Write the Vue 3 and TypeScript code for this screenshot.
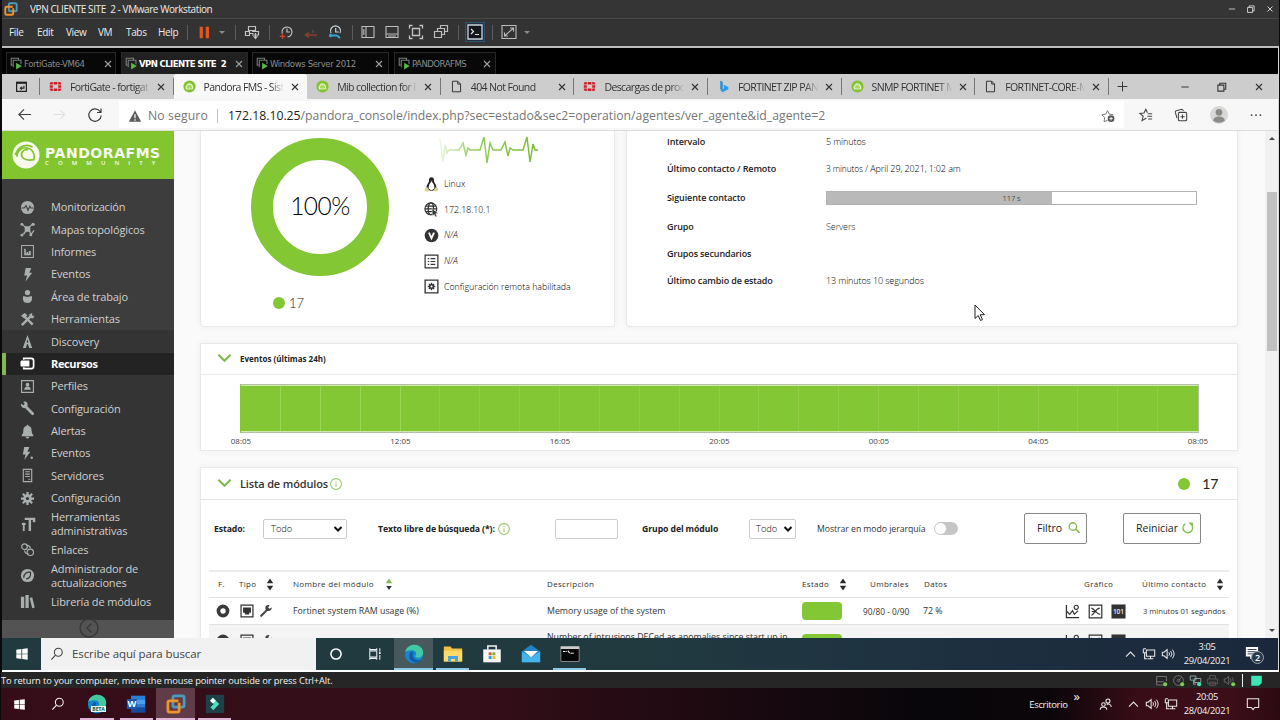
<script setup lang="ts">
interface BrowserTab { title: string; icon: string; active?: boolean }
interface MenuEntry { label: string; icon: string; kind?: string }

const icons: Record<string, string> = {
  vmware: '<g fill="none" stroke-width="2.2"><rect x="5.500" y="1.500" width="9" height="9" rx="1.500" stroke="#4b9cb8"/><path d="M10 5.500H3a1.500 1.500 0 0 0-1.500 1.500v6A1.500 1.500 0 0 0 3 14.500h6a1.500 1.500 0 0 0 1.500-1.500V7" stroke="#f0932b"/></g>',
  pause: '<path d="M2 1h4v14H2zM9.500 1h4v14h-4z" fill="#e2571f"/>',
  caret: '<path d="M2 4h6L5 7z" fill="#8c8c8c"/>',
  send: '<g fill="none" stroke="#c4c4c4" stroke-width="1.200"><path d="M4.500 2.500h7v4h-7zM1.500 7.500h4v4h-4zM8 7.500h6.500v3.500H8M5.500 9.500h4"/><path d="M11.500 9v5M9.500 12l2 2.500 2-2.500"/></g>',
  snapNew: '<g fill="none" stroke="#bdbdbd" stroke-width="1.200"><path d="M4.200 9.500A5 5 0 1 1 9.500 13"/><path d="M9 4.500V8h3"/></g><path d="M4.500 9.500v5.500M1.700 12.300h5.600" stroke="#c8472d" stroke-width="1.300"/>',
  snapBack: '<path d="M3 11h11M6 8.500l-3.500 2.500 3.500 2.500" fill="none" stroke="#8f3f2e" stroke-width="1.500"/><path d="M10 6v3" stroke="#555" stroke-width="1.200"/>',
  snapTool: '<g fill="none" stroke="#c9d4d8" stroke-width="1.200"><path d="M4 9A5 5 0 1 1 13 9"/><path d="M8.700 4V8h3"/></g><path d="M2 11.500h8M3.500 9.800v3.400M10 11.500l3 2.500" stroke="#34a5d6" stroke-width="2"/>',
  side: '<path d="M2 2.500h12v11H2zM6 2.500v11M3.800 5v6" fill="none" stroke="#bdbdbd" stroke-width="1.100"/>',
  bottom: '<path d="M2 2.500h12v11H2zM2 10h12M4 12h8" fill="none" stroke="#bdbdbd" stroke-width="1.100"/>',
  full: '<path d="M4.500 4.500h7v7h-7zM1.500 4.500v-3h3M11.500 1.500h3v3M14.500 11.500v3h-3M4.500 14.500h-3v-3" fill="none" stroke="#c4c4c4" stroke-width="1.300"/>',
  unity: '<path d="M1.500 7.500h7v6h-7zM4.500 7.500v-3h7v6h-3M7.500 4.500v-3h7v6h-3" fill="none" stroke="#bdbdbd" stroke-width="1.200"/>',
  console: '<path d="M1 1h14v14H1z" fill="#14171d" stroke="#c9d3e2" stroke-width="1.300"/><path d="M4 5l2.500 2.500L4 10M8 10.500h4" fill="none" stroke="#e4e4e4" stroke-width="1.200"/>',
  stretch: '<path d="M1 1.500h14v13H1zM9 4h3.500v3.500M12 4.500L4 11.500M3.500 8.500V12H7" fill="none" stroke="#bdbdbd" stroke-width="1.100"/>',
  vm: '<path d="M3 10H1.500V1.500h9V4M4 12.500V4h9.500v5" fill="none" stroke="#77807a" stroke-width="1.300"/><path d="M7.500 7l7 4.200-7 4.300z" fill="#58b944"/>',
  x: '<path d="M4 4l8 8M12 4l-8 8" fill="none" stroke="currentColor" stroke-width="1.500"/>',
  tabsMenu: '<path d="M2 3h12v11H2z" fill="none" stroke="#222" stroke-width="1.500"/><path d="M2 3.500h12" stroke="#222" stroke-width="2.500"/><path d="M11 7v3H6.500M8.500 8l-2 2 2 2" fill="none" stroke="#222" stroke-width="1.300"/>',
  forti: '<g fill="#d31f2c"><path d="M5.800 2.500h4.400v3H5.800zM5.800 10.500h4.400v3H5.800zM1 6.500h3.700v3H1zM11.300 6.500H15v3h-3.700zM1 5.500v-1a2 2 0 0 1 2-2h1.700v3zM15 5.500v-1a2 2 0 0 0-2-2h-1.700v3zM1 10.500v1a2 2 0 0 0 2 2h1.700v-3zM15 10.500v1a2 2 0 0 1-2 2h-1.700v-3z"/></g>',
  pandora: '<circle cx="8" cy="8" r="7.500" fill="#83c332"/><path d="M4.200 11C2.700 6.500 7 3.800 9.500 5.200c2 1 2.500 3.500 2.500 5.600z" fill="#a9da61" stroke="#e9f6d2" stroke-width="1.300"/>',
  page: '<path d="M3 1.500h6.500L13 5v9.500H3zM9.500 1.500V5H13" fill="none" stroke="#333" stroke-width="1.200"/>',
  bing: '<path d="M4 1l3 1v11l-3-1.600z" fill="#268bd8"/><path d="M7.500 5.500L14 8.500v3L7 15l-3-2 4-2 .8-2.200z" fill="#2b9be6"/>',
  plus: '<path d="M8 2v12M2 8h12" stroke="#333" stroke-width="1.200"/>',
  min: '<path d="M3 8h10" stroke="currentColor" stroke-width="1.300"/>',
  restore: '<path d="M2.500 5.500h8v8h-8zM5 5V3h8v8h-2" fill="none" stroke="currentColor" stroke-width="1.400"/>',
  back: '<path d="M15 8H2M7.500 2.500L2 8l5.500 5.500" fill="none" stroke="#404040" stroke-width="1.200"/>',
  forward: '<path d="M2 8h12M9 3.500L13.500 8 9 12.500" fill="none" stroke="#dedede" stroke-width="1.100"/>',
  reload: '<path d="M13.300 4.800A6.200 6.200 0 1 0 14.200 8.500M14 1.500v4h-4" fill="none" stroke="#3d3d3d" stroke-width="1.200"/>',
  warn: '<path d="M8 1.500l7 13H1z" fill="#5b5b5b"/><path d="M8 6v4.500M8 11.800v1.500" stroke="#fff" stroke-width="1.400"/>',
  starAdd: '<path d="M7.500 13l-4 1.500.7-4.700L1 6.500 5.500 5.800 7.500 1.800 9.500 5.800 14 6.500" fill="none" stroke="#777" stroke-width="1.100"/><circle cx="11.500" cy="11" r="3.800" fill="#555"/><path d="M11.500 9v4M9.500 11h4" stroke="#fff"/>',
  favs: '<path d="M8.500 11.500L3.500 14.500 4.800 9.500 1 6.300l4.700-.5L7.800 1.500 9.600 5.500M10 6.500h5M9.500 9.500H15M10.500 12.500H15" fill="none" stroke="#444" stroke-width="1.200"/>',
  collect: '<rect x="5" y="5" width="9.500" height="9.500" rx="1.500" fill="none" stroke="#444" stroke-width="1.200"/><path d="M9.700 7.500v4.800M7.300 9.900h4.800M3.500 11.500L1.500 5a1.500 1.500 0 0 1 1-1.800L9 1.500 11 3" fill="none" stroke="#444" stroke-width="1.200"/>',
  avatar: '<circle cx="8" cy="8" r="8" fill="#d8d8d6"/><circle cx="8" cy="5.600" r="3" fill="#8c8a87"/><path d="M2.900 13c0-5 10.200-5 10.200 0a8 8 0 0 1-10.200 0z" fill="#8c8a87"/>',
  dots: '<g fill="#333"><circle cx="3" cy="8" r="1"/><circle cx="8" cy="8" r="1"/><circle cx="13" cy="8" r="1"/></g>',
  monitor: '<circle cx="8" cy="8" r="7" fill="#a9afaf"/><path d="M1.500 8.500h3L6.500 6l2 5 2-4.500 1 2h3" fill="none" stroke="#3d3d3d" stroke-width="1.100"/>',
  topology: '<path d="M2 2l4 4M14 2l-4 3M2 14l4-4M10 9l1.500 4M4 13l2-3M12 13l3-4" stroke="#a9afaf" stroke-width="1.300"/><rect x="5" y="4.500" width="6" height="6" fill="#a9afaf"/><g fill="#a9afaf"><circle cx="2" cy="2.500" r="1.500"/><circle cx="14" cy="2.500" r="1.700"/><circle cx="2" cy="14" r="1.500"/><circle cx="11.500" cy="13.500" r="1.600"/></g>',
  report: '<path d="M1.700 1.700h12.600v12.600H1.700z" fill="none" stroke="#a9afaf" stroke-width="1.100"/><path d="M4.500 5v7h7V7.500h-2V10H8.700V8.500H7V10H6.200V5z" fill="#a9afaf"/>',
  bolt: '<path d="M6 1h6L10 6h3L6 15.500 7.500 9H4.500z" fill="#a9afaf"/>',
  work: '<circle cx="8" cy="3.800" r="2.800" fill="#a9afaf"/><path d="M3.500 7.500l4.500 1 4.500-1c1 3.500 0 7.500-4.500 7.500S2.500 11 3.500 7.500z" fill="#a9afaf"/>',
  tools: '<path d="M2 14L11 5M4 4l9.500 9.500" stroke="#a9afaf" stroke-width="2.600"/><path d="M1 4l4-3 3 2.500-3.500 3.500zM10 2.500L13 1v3h2.500L14 7l-4-1z" fill="#a9afaf"/>',
  discovery: '<path d="M8 1l5 14H9.800L8.500 11h-1L6.200 15H3z" fill="#a9afaf"/><path d="M8 5.500l1 3.500H7z" fill="#333"/>',
  resources: '<path d="M4 4V2.500h8A2.500 2.500 0 0 1 14.500 5v6a2.500 2.500 0 0 1-2.500 2.500H4V12" fill="none" stroke="#fff" stroke-width="1.800"/><path d="M1.500 4.800H10v6.400H1.500A1.500 1.500 0 0 1 .5 10V6a1.500 1.500 0 0 1 1-1.200z" fill="#fff"/>',
  profile: '<path d="M1.700 1.700h12.600v12.600H1.700z" fill="none" stroke="#a9afaf" stroke-width="1.200"/><circle cx="8" cy="6" r="2" fill="#a9afaf"/><path d="M4.500 11.500c0-4.500 7-4.500 7 0z" fill="#a9afaf"/>',
  wrench: '<path d="M6.500 6.500l7 7" stroke="#a9afaf" stroke-width="3" stroke-linecap="round"/><path d="M1 3l3 1.500L5 3 3.500 1C7-.5 9.500 3 7.500 6.500 5 9 .5 7 1 3z" fill="#a9afaf"/>',
  bell: '<path d="M8 .8c.8 0 1 .7 1 1.300 3 .6 3.500 3 3.500 6 0 2 1 2.900 1.700 3.900v1H1.800v-1c.7-1 1.700-1.900 1.700-3.900 0-3 .5-5.400 3.500-6 0-.6.200-1.300 1-1.300zM6 13.700h4C9.800 16 6.200 16 6 13.700z" fill="#a9afaf"/>',
  boltPlus: '<path d="M4.500 1h5.500L8 6h3L4.500 15 6 9H3z" fill="#a9afaf"/><circle cx="12.500" cy="12.500" r="1.300" fill="#a9afaf"/>',
  server: '<path d="M3.500 1.500h9v13h-9zM5.500 4h5M5.500 6.500h5M5.500 9h5" fill="none" stroke="#a9afaf" stroke-width="1.200"/><path d="M9 12h2" stroke="#a9afaf"/>',
  gear: '<g stroke="#a9afaf" stroke-width="2.400"><path d="M8 1v14M1 8h14M3 3l10 10M13 3L3 13"/></g><circle cx="8" cy="8" r="4.600" fill="#a9afaf"/><circle cx="8" cy="8" r="1.700" fill="#333"/>',
  admin: '<path d="M5 2h10v3.500M10.500 2v13" fill="none" stroke="#a9afaf" stroke-width="2.600"/><path d="M4 6v9M2 7.500h4" stroke="#a9afaf" stroke-width="2"/>',
  links: '<g fill="none" stroke="#a9afaf" stroke-width="1.300"><circle cx="4.800" cy="5" r="3"/><circle cx="11" cy="11" r="3.400"/><path d="M7 3.500c3 0 4 1.500 4 3.500M9 12.500C6 12.500 5 11 5 9"/></g>',
  update: '<circle cx="8" cy="8" r="7" fill="#a9afaf"/><path d="M4 10.500C4 5.500 8 4 11 4.500c1.500 3-1 7-4.500 7" fill="none" stroke="#333" stroke-width="1.300"/>',
  library: '<path d="M1 3h3.500v12H1zM5.800 1h3.500v14H5.800zM10.300 4.200l2.700-.7 2.700 11-2.700.7z" fill="#a9afaf"/>',
  collapse: '<circle cx="10" cy="10" r="9" fill="none" stroke="#383838" stroke-width="1.400"/><path d="M12.500 5.500L8 10l4.500 4.500" fill="none" stroke="#383838" stroke-width="1.300"/>',
  linux: '<path d="M8 .3c2.300 0 2.700 1.700 2.700 3.900 0 1.700 3.200 4.800 2.800 9L8 15 2.500 13.200C2 9 5.300 5.900 5.300 4.200c0-2.200.4-3.900 2.700-3.900z" fill="#222"/><path d="M8 5c2.300 1.700 3.300 4.300 3 7.300L8 14.300 5 12.300C4.700 9.300 5.700 6.700 8 5z" fill="#fff"/><path d="M.7 12l2.700-1.300 2.700 4-2.500 1-3-1.300zM15.300 12l-2.700-1.300-2.700 4 2.500 1 3-1.300z" fill="#dfd09a"/><path d="M6.700 4h2.600L8 5.500z" fill="#e0b53b"/>',
  globe: '<g fill="none" stroke="#333" stroke-width="1.300"><circle cx="7.300" cy="7.300" r="6.300"/><ellipse cx="7.300" cy="7.300" rx="2.800" ry="6.300"/><path d="M1 7.300h12.600M2 4.300h10.600M2 10.300h10.600"/></g><path d="M8.500 7l6.500 5-2.500.4 1.300 2.900-1.500.8-1.400-2.900-1.700 1.700z" fill="#333" stroke="#fff" stroke-width=".5"/>',
  version: '<circle cx="8" cy="8" r="7.300" fill="#333"/><path d="M5.300 5L8 11 10.700 5" fill="none" stroke="#fff" stroke-width="2"/>',
  list: '<path d="M1.200 1.200h13.600v13.600H1.200z" fill="none" stroke="#333" stroke-width="1.300"/><path d="M4 5h1.500M7 5h5M4 8h1.500M7 8h5M4 11h1.500M7 11h5" stroke="#333" stroke-width="1.300"/>',
  cfgBox: '<path d="M1.200 1.200h13.600v13.600H1.200z" fill="none" stroke="#333" stroke-width="1.400"/><g stroke="#333" stroke-width="1.400"><path d="M8 4v8M4 8h8M5.200 5.200l5.600 5.600M10.800 5.200l-5.600 5.600"/></g><circle cx="8" cy="8" r="2.700" fill="#333"/><circle cx="8" cy="8" r="1.100" fill="#fff"/>',
  down: '<path d="M1.500 4L8 10.500 14.500 4" fill="none" stroke="#82b94e" stroke-width="2.300"/>',
  info: '<circle cx="8" cy="8" r="7.200" fill="none" stroke="#97c765" stroke-width="1.400"/><path d="M8 4.300v1.700M8 7v5" stroke="#97c765" stroke-width="1.400"/>',
  selectArrow: '<path d="M2.500 3L6 6.500 9.500 3" fill="none" stroke="#111" stroke-width="2"/>',
  lens: '<circle cx="6.500" cy="6" r="5" fill="none" stroke="#82b94e" stroke-width="1.700"/><path d="M10 9.500l5.500 5" stroke="#82b94e" stroke-width="2"/>',
  reset: '<path d="M4.500 2.500A6.300 6.300 0 1 0 13.500 5.500" fill="none" stroke="#7cc144" stroke-width="1.900"/><path d="M8.500 .5h6v6z" fill="#7cc144"/>',
  sort: '<path d="M1 6.500L5 .5 9 6.500z" fill="#2a2a2a"/><path d="M1 9.500L5 15.500 9 9.500z" fill="#2a2a2a"/>',
  sortUp: '<path d="M1 6.500L5 .5 9 6.500z" fill="#80b94c"/><path d="M1.500 10L5 15 8.500 10z" fill="#2b3545"/>',
  ring: '<circle cx="8" cy="8" r="5.200" fill="none" stroke="#3a3a3a" stroke-width="4.200"/>',
  net: '<path d="M1.200 1.200h13.600v13.600H1.200z" fill="none" stroke="#333" stroke-width="1.400"/><path d="M3.500 4h9v6h-2v2h-5v-2h-2z" fill="#333"/>',
  tool: '<path d="M2.500 13.500L9 7" stroke="#444" stroke-width="2.400" stroke-linecap="round"/><path d="M14.500 4L12 5.500 10.500 4 12 1.300C8 .5 6 4 8 7c3 2.500 7 .5 6.500-3z" fill="#444"/>',
  graph: '<path d="M1.500 1v13.500H15M2 8l3 3 3-4 2 4 4-4" fill="none" stroke="#333" stroke-width="1.300"/><circle cx="12" cy="3.500" r="2.200" fill="none" stroke="#333" stroke-width="1.200"/>',
  chart: '<path d="M1.300 1.300h13.400v13.400H1.300z" fill="none" stroke="#333" stroke-width="1.300"/><path d="M3.500 4.500c3 0 5.500 6.500 9.500 6.500M3.500 12C7 11.500 7.500 5 12.500 4.500M4 8h3.500" fill="none" stroke="#333" stroke-width="1.300"/>',
  data: '<path d="M.5 .5h15v15H.5z" fill="#333"/><text x="8" y="10.700" font-size="7" font-family="Open Sans, sans-serif" font-weight="600" fill="#e8e8e8" text-anchor="middle">101</text>',
  win: '<path d="M1.500 3.200L7.300 2.400v5.200H1.500zM8.200 2.300L14.500 1.400v6.200H8.200zM1.500 8.400h5.800v5.200L1.500 12.800zM8.200 8.400h6.300v6.200L8.200 13.700z" fill="#fff"/>',
  search: '<circle cx="9.500" cy="6" r="4.500" fill="none" stroke="currentColor" stroke-width="1.200"/><path d="M6.300 9.300L1.500 14.500" stroke="currentColor" stroke-width="1.200"/>',
  cortana: '<circle cx="8" cy="8" r="5.800" fill="none" stroke="#fff" stroke-width="1.800"/>',
  taskview: '<path d="M2 4.500h8v7H2zM2 1.500V3h8V1.500M2 14.500V13h8v1.500M13.500 1.500v4M13.500 9v5.500" fill="none" stroke="#e8eef0" stroke-width="1.200"/><path d="M12.500 6h2v2h-2z" fill="#fff"/>',
  edge: '<circle cx="12" cy="12" r="11" fill="#1686cf"/><path d="M1.500 9.500C3 3.500 8 1 12.500 1 19 1 23 5.500 23 10.500c0 4-3 6-6.500 6-2.500 0-3.500-1.200-3-2 2.500-3 .5-6.500-3-7C6.500 7 3 8 1.500 9.500z" fill="#43c9a0"/><path d="M9 9c-4 3-3.500 9 1 12 4 2.500 9 1 11-2.500-5 2.500-11-.5-10.500-5 .1-1.500 1-2.500 1-2.500z" fill="#135ba8"/>',
  folder: '<path d="M1 3h8l2 2.500h12V21H1z" fill="#f3bf45"/><path d="M1 8h22v13H1z" fill="#ffd96a"/><path d="M6 21v-6.500h12V21h-3.500v-3h-5v3z" fill="#4aa3dc"/>',
  store: '<path d="M7 7V2.500h10V7" fill="none" stroke="#f4f4f4" stroke-width="1.800"/><path d="M1.500 6.500h21V22h-21z" fill="#f7f7f7"/><path d="M8 10h3.500v3.500H8z" fill="#e0562d"/><path d="M12.500 10H16v3.500h-3.500z" fill="#7db42d"/><path d="M8 14.500h3.500V18H8z" fill="#23a2df"/><path d="M12.500 14.500H16V18h-3.500z" fill="#f3b823"/>',
  mail: '<path d="M1 9l11-8 11 8v13H1z" fill="#2182c8"/><path d="M1 9l11 7 11-7v13H1z" fill="#46b4e8"/><path d="M3.500 8.500h17L12 16z" fill="#f6fbff"/>',
  cmd: '<path d="M1 3h22v18H1z" fill="#060606" stroke="#999" stroke-width="1"/><path d="M1 3h22v3H1z" fill="#ccc"/><path d="M3.500 9h3M7.500 9h1M9.500 8l2 3M12.500 11h4" stroke="#eee" stroke-width="1.300"/>',
  up: '<path d="M2.500 10.500L8 5l5.500 5.500" fill="none" stroke="#e9e9e9" stroke-width="1.300"/>',
  network: '<path d="M5 3.500h9.500v7H5zM9.700 10.500v3M6.500 13.500h6.500M1.500 2.500v4h3M1.500 2h3M3 6.500v7h3" fill="none" stroke="#e9e9e9" stroke-width="1.200"/>',
  sound: '<path d="M1.500 6h2L7 3v10L3.500 10h-2z" fill="none" stroke="#e9e9e9" stroke-width="1.200"/><path d="M9 6q1.500 2 0 4M11 4.500q3 3.500 0 7M13 3q4 5 0 10" fill="none" stroke="#e9e9e9" stroke-width="1.100"/>',
  notice: '<path d="M1 1h14v11H9.500L6 15v-3H1z" fill="#fff"/><path d="M3 4h10M3 6.500h10M3 9h7" stroke="#1c2c40" stroke-width="1"/>',
  bubble: '<path d="M1.500 2h13v10H10L8 14.500 6 12H1.500z" fill="none" stroke="#e9e9e9" stroke-width="1.200"/>',
  people: '<g fill="none" stroke="#eee" stroke-width="1.300"><circle cx="5.500" cy="8" r="2.200"/><path d="M1.500 14.500c0-4.500 8-4.500 8 0"/><circle cx="11" cy="3.800" r="2.500"/><path d="M9.500 8c2.500-1.500 5.500 0 5.500 3"/></g>',
  disk: '<path d="M2 10V3h12v6M2 9.500v4h9M2 9.500h9" fill="none" stroke="#7b7b7b" stroke-width="1.100"/><circle cx="12.500" cy="12.500" r="2.500" fill="#7fcf4d"/>',
  cd: '<circle cx="8" cy="8" r="6" fill="none" stroke="#7b7b7b" stroke-width="1.100"/><circle cx="8" cy="8" r="1.600" fill="none" stroke="#7b7b7b"/><path d="M8 8L12 4" stroke="#7b7b7b"/><circle cx="12.500" cy="12.500" r="2.500" fill="#7fcf4d"/>',
  lan: '<path d="M1.500 2.500h7v5h-7zM5.500 7.500v5h3M6.500 5.500h8v5h-8z" fill="none" stroke="#8aa3a3" stroke-width="1.200"/><circle cx="12.500" cy="12.500" r="2.500" fill="#4fdcb5"/>',
  printer: '<path d="M4.500 6V2h7v4M2 12V6h12v6zM4.500 10h7v4h-7z" fill="none" stroke="#585858" stroke-width="1.200"/>',
  spk: '<path d="M1.500 6h2L7 3v10L3.500 10h-2zM9 5.500q2 2.500 0 5M11 4q2 2 1.500 5" fill="none" stroke="#6b6b6b" stroke-width="1.100"/><circle cx="12.500" cy="12.500" r="2.500" fill="#7fcf4d"/>',
  note: '<path d="M1.500 2h13v9l-3.500 3.500H1.500z" fill="#39e6b4"/>',
  word: '<path d="M6 2h17v20H6z" fill="#2b7cd3"/><path d="M6 7h17v5H6z" fill="#4aa0ea"/><path d="M6 16h17v6H6z" fill="#174a9c"/><path d="M1 6h12v12H1z" fill="#1b57ad"/><text x="7" y="16" font-size="11" font-family="Open Sans, sans-serif" font-weight="700" fill="#fff" text-anchor="middle">W</text>',
  filmora: '<path d="M1 1h22v22H1z" fill="#213f46"/><path d="M6 8l3.500-3.500L17 12l-7 7.500L6.500 16l4-4z" fill="#4de0bd"/><path d="M6 8l3.500-3.500L13 8l-3.500 3.500z" fill="#f2fffc"/>',
}

const menus = ['File', 'Edit', 'View', 'VM', 'Tabs', 'Help']
const vmTabs = [
  { name: 'FortiGate-VM64', cls: 'v1' },
  { name: 'VPN CLIENTE SITE  2', cls: 'v2' },
  { name: 'Windows Server 2012', cls: 'v3' },
  { name: 'PANDORAFMS', cls: 'v4' },
]
const tabs: BrowserTab[] = [
  { title: 'FortiGate - fortigat', icon: 'forti' },
  { title: 'Pandora FMS - Sist', icon: 'pandora', active: true },
  { title: 'Mib collection for I', icon: 'pandora' },
  { title: '404 Not Found', icon: 'page' },
  { title: 'Descargas de prod', icon: 'forti' },
  { title: 'FORTINET ZIP PAN', icon: 'bing' },
  { title: 'SNMP FORTINET M', icon: 'pandora' },
  { title: 'FORTINET-CORE-M', icon: 'page' },
]
const menu: MenuEntry[] = [
  { label: 'Monitorización', icon: 'monitor' },
  { label: 'Mapas topológicos', icon: 'topology' },
  { label: 'Informes', icon: 'report' },
  { label: 'Eventos', icon: 'bolt' },
  { label: 'Área de trabajo', icon: 'work' },
  { label: 'Herramientas', icon: 'tools' },
  { label: 'Discovery', icon: 'discovery', kind: 'dark' },
  { label: 'Recursos', icon: 'resources', kind: 'current' },
  { label: 'Perfiles', icon: 'profile', kind: 'dark' },
  { label: 'Configuración', icon: 'wrench', kind: 'dark' },
  { label: 'Alertas', icon: 'bell', kind: 'dark' },
  { label: 'Eventos', icon: 'boltPlus', kind: 'dark' },
  { label: 'Servidores', icon: 'server', kind: 'dark' },
  { label: 'Configuración', icon: 'gear', kind: 'dark' },
  { label: 'Herramientas administrativas', icon: 'admin', kind: 'dark tall' },
  { label: 'Enlaces', icon: 'links', kind: 'dark' },
  { label: 'Administrador de actualizaciones', icon: 'update', kind: 'dark tall' },
  { label: 'Librería de módulos', icon: 'library', kind: 'dark' },
]
const facts = [
  { icon: 'linux', text: 'Linux', cls: 'os' },
  { icon: 'globe', text: '172.18.10.1', cls: 'ip' },
  { icon: 'version', text: 'N/A', cls: 'na' },
  { icon: 'list', text: 'N/A', cls: 'na' },
  { icon: 'cfgBox', text: 'Configuración remota habilitada', cls: '' },
]
const hours = ['08:05', '12:05', '16:05', '20:05', '00:05', '04:05', '08:05']
</script>

<template>
  <div class="screen">
    <header class="title-bar">
      <svg class="s14" viewBox="0 0 16 16" v-html="icons.vmware" />
      <span class="title">VPN CLIENTE SITE&nbsp; 2 - VMware Workstation</span>
      <div class="win-btns">
        <svg viewBox="0 0 16 16" v-html="icons.min" />
        <svg viewBox="0 0 16 16" v-html="icons.restore" />
        <svg viewBox="0 0 16 16" v-html="icons.x" />
      </div>
    </header>

    <nav class="menu-bar">
      <span v-for="m in menus" :key="m">{{ m }}</span>
      <i class="sep" />
      <svg class="s13" viewBox="0 0 16 16" v-html="icons.pause" />
      <svg class="s10" viewBox="0 0 10 10" v-html="icons.caret" />
      <i class="sep" />
      <svg class="s16" viewBox="0 0 16 16" v-html="icons.send" />
      <i class="sep" />
      <svg class="s16" viewBox="0 0 16 16" v-html="icons.snapNew" />
      <svg class="s16" viewBox="0 0 16 16" v-html="icons.snapBack" />
      <svg class="s16" viewBox="0 0 16 16" v-html="icons.snapTool" />
      <i class="sep" />
      <svg class="s16" viewBox="0 0 16 16" v-html="icons.side" />
      <svg class="s16" viewBox="0 0 16 16" v-html="icons.bottom" />
      <svg class="s16" viewBox="0 0 16 16" v-html="icons.full" />
      <svg class="s16" viewBox="0 0 16 16" v-html="icons.unity" />
      <i class="sep" />
      <b class="pressed"><svg class="s16" viewBox="0 0 16 16" v-html="icons.console" /></b>
      <i class="sep" />
      <svg class="s16" viewBox="0 0 16 16" v-html="icons.stretch" />
      <svg class="s10" viewBox="0 0 10 10" v-html="icons.caret" />
    </nav>

    <div class="guest">
      <div class="vm-tabs">
        <div v-for="t in vmTabs" :key="t.name" class="vm-tab" :class="t.cls">
          <svg class="s13" viewBox="0 0 16 16" v-html="icons.vm" />
          <span>{{ t.name }}</span>
          <svg class="s12 close" viewBox="0 0 16 16" v-html="icons.x" />
        </div>
      </div>

      <div class="tab-strip">
        <div class="tabs-menu"><svg class="s13" viewBox="0 0 16 16" v-html="icons.tabsMenu" /></div>
        <div v-for="t in tabs" :key="t.title" class="tab" :class="{ active: t.active }">
          <svg class="s13" viewBox="0 0 16 16" v-html="icons[t.icon]" />
          <span>{{ t.title }}</span>
          <svg class="s12" viewBox="0 0 16 16" v-html="icons.x" />
        </div>
        <div class="new-tab"><svg class="s13" viewBox="0 0 16 16" v-html="icons.plus" /></div>
        <div class="edge-btns">
          <svg class="s12" viewBox="0 0 16 16" v-html="icons.min" />
          <svg class="s12" viewBox="0 0 16 16" v-html="icons.restore" />
          <svg class="s12" viewBox="0 0 16 16" v-html="icons.x" />
        </div>
      </div>

      <div class="address-bar">
        <div class="nav-btns">
          <svg class="s15" viewBox="0 0 16 16" v-html="icons.back" />
          <svg class="s15" viewBox="0 0 16 16" v-html="icons.forward" />
          <svg class="s16" viewBox="0 0 16 16" v-html="icons.reload" />
        </div>
        <div class="field">
          <svg class="s14" viewBox="0 0 16 16" v-html="icons.warn" />
          <span class="unsafe">No seguro</span>
          <i />
          <span class="url"><b>172.18.10.25</b>/pandora_console/index.php?sec=estado&amp;sec2=operation/agentes/ver_agente&amp;id_agente=2</span>
          <svg class="s14 star" viewBox="0 0 16 16" v-html="icons.starAdd" />
        </div>
        <div class="bar-btns">
          <svg class="s14" viewBox="0 0 16 16" v-html="icons.favs" />
          <svg class="s14" viewBox="0 0 16 16" v-html="icons.collect" />
          <svg class="s18" viewBox="0 0 16 16" v-html="icons.avatar" />
          <svg class="s14" viewBox="0 0 16 16" v-html="icons.dots" />
        </div>
      </div>

      <div class="page">
        <aside>
          <div class="brand">
            <svg viewBox="0 0 30 30">
              <circle cx="15" cy="15" r="14.500" fill="#f6fbee" />
              <path d="M5.500 17C5 10 12 5.500 18 8c5 2 6.500 7 5.500 12-6 1-11 0-13-3.500C9 12 13 8.500 17 9.500M3.500 15C7 5 16 2.500 22 6.500" fill="none" stroke="#82c52f" stroke-width="1.800" />
            </svg>
            <div class="brand-name"><strong>PANDORAFMS</strong><small>COMMUNITY</small></div>
          </div>
          <ul>
            <li v-for="(m, i) in menu" :key="i" :class="m.kind">
              <svg class="s15" viewBox="0 0 16 16" v-html="icons[m.icon]" />
              <span>{{ m.label }}</span>
            </li>
          </ul>
          <div class="collapse"><svg viewBox="0 0 20 20" v-html="icons.collapse" /></div>
        </aside>

        <main>
          <div class="top-cards">
            <section class="card agent">
              <div class="donut-col">
                <div class="donut"><span>100%</span></div>
                <div class="legend"><i class="dot" /><span>17</span></div>
              </div>
              <div class="facts">
                <svg class="pulse" viewBox="0 0 98 30">
                  <defs><linearGradient id="fade"><stop offset="0" stop-color="#7fc23c" stop-opacity=".15" /><stop offset=".3" stop-color="#7fc23c" stop-opacity=".8" /><stop offset="1" stop-color="#76bd34" /></linearGradient></defs>
                  <path d="M0 4L3 27L5 10L7 18L9 15H19L23 8L26 20L28 13L30 15H40L44 2L47 28L50 8L53 15H61L65 7L68 21L70 13L73 15H83L87 2L90 27L93 9L95 15H98" fill="none" stroke="url(#fade)" stroke-width="1.500" />
                </svg>
                <div v-for="(f, i) in facts" :key="i" class="fact" :class="f.cls">
                  <svg class="s15" viewBox="0 0 16 16" v-html="icons[f.icon]" />
                  <span>{{ f.text }}</span>
                </div>
              </div>
            </section>
            <section class="card details">
              <b>Intervalo</b><span>5 minutos</span>
              <b>Último contacto / Remoto</b><span><small>3 minutos</small> / April 29, 2021, 1:02 am</span>
              <b>Siguiente contacto</b><div class="progress"><i /><em>117 s</em></div>
              <b>Grupo</b><span class="grey">Servers</span>
              <b>Grupos secundarios</b><span />
              <b>Último cambio de estado</b><span>13 minutos 10 segundos</span>
            </section>
          </div>

          <section class="card events">
            <header><svg class="s15" viewBox="0 0 16 16" v-html="icons.down" /><b>Eventos (últimas 24h)</b></header>
            <div class="chart"><i v-for="n in 24" :key="n" /></div>
            <div class="axis"><span v-for="(h, i) in hours" :key="i">{{ h }}</span></div>
          </section>

          <section class="card modules">
            <header>
              <svg class="s15" viewBox="0 0 16 16" v-html="icons.down" />
              <b>Lista de módulos</b>
              <svg class="s12 inf" viewBox="0 0 16 16" v-html="icons.info" />
              <div class="count"><i class="dot" /><span>17</span></div>
            </header>
            <div class="filters">
              <b>Estado:</b>
              <div class="select">Todo<svg class="s12" viewBox="0 0 12 10" v-html="icons.selectArrow" /></div>
              <b class="q">Texto libre de búsqueda (*): <svg class="s12" viewBox="0 0 16 16" v-html="icons.info" /></b>
              <div class="input" />
              <b>Grupo del módulo</b>
              <div class="select small">Todo<svg class="s12" viewBox="0 0 12 10" v-html="icons.selectArrow" /></div>
              <span class="hier">Mostrar en modo jerarquía</span>
              <div class="toggle"><i /></div>
              <div class="btn">Filtro<svg class="s12" viewBox="0 0 16 16" v-html="icons.lens" /></div>
              <div class="btn reset">Reiniciar<svg class="s12" viewBox="0 0 16 16" v-html="icons.reset" /></div>
            </div>
            <div class="row head">
              <span>F.</span><span>Tipo</span><svg class="sort" viewBox="0 0 10 16" v-html="icons.sort" />
              <span>Nombre del módulo</span><svg class="sort" viewBox="0 0 10 16" v-html="icons.sortUp" />
              <span>Descripción</span><span>Estado</span><svg class="sort" viewBox="0 0 10 16" v-html="icons.sort" />
              <span>Umbrales</span><span>Datos</span><span>Gráfico</span>
              <span>Último contacto</span><svg class="sort" viewBox="0 0 10 16" v-html="icons.sort" />
            </div>
            <div v-for="n in 2" :key="n" class="row body" :class="{ alt: n === 2 }">
              <svg class="s14" viewBox="0 0 16 16" v-html="icons.ring" />
              <svg class="s14" viewBox="0 0 16 16" v-html="icons.net" />
              <svg class="s14" viewBox="0 0 16 16" v-html="icons.tool" />
              <span class="nm">{{ n === 1 ? 'Fortinet system RAM usage (%)' : '' }}</span>
              <span class="ds">{{ n === 1 ? 'Memory usage of the system' : 'Number of intrusions DECed as anomalies since start up in' }}</span>
              <i class="pill" />
              <span class="thr">{{ n === 1 ? '90/80 - 0/90' : '' }}</span>
              <span>{{ n === 1 ? '72 %' : '' }}</span>
              <div class="acts">
                <svg class="s15" viewBox="0 0 16 16" v-html="icons.graph" />
                <svg class="s15" viewBox="0 0 16 16" v-html="icons.chart" />
                <svg class="s15" viewBox="0 0 16 16" v-html="icons.data" />
              </div>
              <span class="last">{{ n === 1 ? '3 minutos 01 segundos' : '' }}</span>
            </div>
          </section>
        </main>

        <div class="scroll"><span class="arrow-up" /><i /><span class="arrow-down" /></div>
      </div>

      <footer class="guest-bar">
        <div class="start"><svg class="s14" viewBox="0 0 16 16" v-html="icons.win" /></div>
        <div class="find"><svg class="s14" viewBox="0 0 16 16" v-html="icons.search" /><span>Escribe aquí para buscar</span></div>
        <div class="app"><svg class="s14" viewBox="0 0 16 16" v-html="icons.cortana" /></div>
        <div class="app"><svg class="s14" viewBox="0 0 16 16" v-html="icons.taskview" /></div>
        <div class="app on hl"><svg class="s20" viewBox="0 0 24 24" v-html="icons.edge" /></div>
        <div class="app on"><svg class="s20" viewBox="0 0 24 24" v-html="icons.folder" /></div>
        <div class="app"><svg class="s20" viewBox="0 0 24 24" v-html="icons.store" /></div>
        <div class="app"><svg class="s20" viewBox="0 0 24 24" v-html="icons.mail" /></div>
        <div class="app on"><svg class="s20" viewBox="0 0 24 24" v-html="icons.cmd" /></div>
        <div class="tray">
          <svg class="s13" viewBox="0 0 16 16" v-html="icons.up" />
          <svg class="s14" viewBox="0 0 16 16" v-html="icons.network" />
          <svg class="s14" viewBox="0 0 16 16" v-html="icons.sound" />
          <div class="clock"><span>3:05</span><span>29/04/2021</span></div>
          <div class="notice"><svg class="s14" viewBox="0 0 16 16" v-html="icons.notice" /><em>2</em></div>
        </div>
      </footer>
    </div>

    <div class="status">
      <span>To return to your computer, move the mouse pointer outside or press Ctrl+Alt.</span>
      <div class="devices">
        <svg v-for="d in ['disk', 'cd', 'lan', 'printer', 'spk']" :key="d" class="s13" viewBox="0 0 16 16" v-html="icons[d]" />
        <i />
        <svg class="s13" viewBox="0 0 16 16" v-html="icons.note" />
      </div>
    </div>

    <footer class="host-bar">
      <div class="hx first"><svg class="s13" viewBox="0 0 16 16" v-html="icons.win" /></div>
      <div class="hx"><svg class="s14" viewBox="0 0 16 16" v-html="icons.search" /></div>
      <div class="hx on"><svg class="s20" viewBox="0 0 24 24" v-html="icons.edge" /><em>BETA</em></div>
      <div class="hx on"><svg class="s20" viewBox="0 0 24 24" v-html="icons.word" /></div>
      <div class="hx on hl"><svg class="s20" viewBox="0 0 16 16" v-html="icons.vmware" /></div>
      <div class="hx on"><svg class="s20" viewBox="0 0 24 24" v-html="icons.filmora" /></div>
      <div class="host-tray">
        <span class="desk">Escritorio</span><span class="more">»</span>
        <svg class="s13" viewBox="0 0 16 16" v-html="icons.people" />
        <svg class="s13" viewBox="0 0 16 16" v-html="icons.up" />
        <svg class="s14" viewBox="0 0 16 16" v-html="icons.sound" />
        <svg class="s14" viewBox="0 0 16 16" v-html="icons.network" />
        <div class="clock"><span>20:05</span><span>28/04/2021</span></div>
        <svg class="s14" viewBox="0 0 16 16" v-html="icons.bubble" />
      </div>
    </footer>

    <svg class="cursor" viewBox="0 0 12 18"><path d="M1 1v13.500l3.200-3 2.300 5 2-.9-2.300-4.900H10.500z" fill="#fff" stroke="#222" stroke-width="1" /></svg>
  </div>
</template>

<style>
html, body { margin: 0; background: #000; overflow: hidden; }
</style>

<style scoped>
* { box-sizing: border-box; }
.screen { position: relative; width: 1280px; height: 720px; overflow: hidden; display: flex; flex-direction: column; background: #0a0a0a; font-family: "Open Sans", "Noto Sans", sans-serif; color: #222; }
svg { display: block; flex: none; overflow: visible; }
span, b { white-space: nowrap; }
.s10 { width: 10px; height: 10px; } .s12 { width: 12px; height: 12px; } .s13 { width: 13px; height: 13px; }
.s14 { width: 14px; height: 14px; } .s15 { width: 15px; height: 15px; } .s16 { width: 16px; height: 16px; }
.s18 { width: 18px; height: 18px; } .s20 { width: 20px; height: 20px; }

.title-bar { height: 19px; flex: none; display: flex; align-items: center; background: #353535; border-bottom: 1px solid #484848; margin: 0 1px 0 2px; padding-left: 2px; color: #ededed; }
.title { font-size: 10px; letter-spacing: -0.42px; margin-left: 12px; }
.win-btns { margin-left: auto; display: flex; gap: 9px; padding-right: 4px; color: #ddd; }
.win-btns svg { width: 10px; height: 10px; }

.menu-bar { height: 27px; flex: none; margin: 0 1px 0 2px; padding: 0 0 1px 7px; background: #333; color: #ececec; font-size: 10px; letter-spacing: -0.35px; display: grid; align-items: center; grid-template-columns: 28px 29px 32px 28px 32px 29px 11px 19px 18px 9px 25px 9px 25px 24px 25px 8px 24px 24px 25px 25px 7px 27px 9px 21px 10px; }
.menu-bar .sep { width: 1px; height: 15px; background: #5b5b5b; }
.pressed { width: 20px; height: 20px; border: 1px solid #2c566d; display: grid; place-items: center; background: #24313a; }

.guest { height: 626px; flex: none; margin: 0 1px 0 2px; border-top: 2px solid #bdbdbd; border-right: 1px solid #d6d6d6; border-bottom: 2px solid #fff; display: flex; flex-direction: column; background: #000; }
.vm-tabs { height: 26px; flex: none; display: flex; align-items: flex-end; gap: 5px; padding-left: 4px; color: #8b8b8b; font-family: "DejaVu Sans Condensed", "DejaVu Sans", sans-serif; font-size: 9.500px; letter-spacing: -0.2px; }
.vm-tab { height: 22px; display: flex; align-items: center; padding: 0 2px 0 3px; border: 1px solid #262626; border-bottom: 0; background: #080808; }
.vm-tab span { margin-left: 1px; white-space: pre; }
.vm-tab .close { margin-left: auto; color: #a0a0a0; }
.v1 { width: 110px; letter-spacing: -0.4px; } .v2 { width: 127px; color: #fff; font-weight: 700; letter-spacing: -0.6px; background: #202020; }
.v1 .close { margin-right: -1px; }
.v3 { width: 137px; margin-left: -1px; letter-spacing: -0.4px; } .v4 { width: 102px; letter-spacing: -0.5px; }
.v3 .close { margin-right: 1px; }

.tab-strip { height: 25px; flex: none; display: flex; background: #cdcdcd; color: #333; font-size: 10.500px; letter-spacing: -0.6px; }
.tabs-menu { width: 38px; display: flex; align-items: center; padding-left: 13px; border-right: 1px solid #777; border-image: linear-gradient(#cdcdcd 20%, #777 20% 80%, #cdcdcd 80%) 1; }
.tab { width: 133.600px; flex: none; display: flex; align-items: center; padding-left: 9px; border-right: 1px solid; border-image: linear-gradient(transparent 20%, #777 20% 80%, transparent 80%) 1; }
.tab span { width: 83px; margin-left: 8px; mask-image: linear-gradient(90deg, #000 80%, transparent 97%); }
.tab > svg:last-child { margin-left: 2px; }
.tab.active { background: #f8f8f8; border-image: none; border-color: #f8f8f8; border-radius: 3px 3px 0 0; }
.new-tab { width: 27px; display: grid; place-items: center; }
.edge-btns { margin-left: auto; display: flex; align-items: center; gap: 25px; padding-right: 13px; }

.address-bar { height: 32px; flex: none; display: flex; align-items: center; background: #f7f7f7; border-bottom: 1px solid #dcdcdc; }
.nav-btns { width: 117px; display: flex; align-items: center; gap: 20px; padding-left: 15px; }
.field { width: 1005px; height: 27px; display: flex; align-items: center; background: #fff; padding: 2px 9px 0 9px; font-size: 12.240px; color: #767676; }
.unsafe { margin-left: 6px; width: 69px; letter-spacing: 0.1px; }
.field i { width: 1px; height: 14px; background: #c4c4c4; }
.url { margin-left: 10px; }
.url b { font-weight: 400; color: #222; }
.star { margin-left: auto; }
.bar-btns { flex: 1; display: flex; align-items: center; justify-content: space-between; padding: 0 15px 0 15px; }

.page { height: 507px; flex: none; display: flex; overflow: hidden; background: #fafafa; }
aside { width: 172px; flex: none; display: flex; flex-direction: column; background: #3d3d3d; }
.brand { height: 48px; flex: none; display: flex; align-items: center; gap: 5px; padding-left: 10px; background: #82c52f; color: #f7fcef; }
.brand > svg { width: 28px; height: 28px; }
.brand-name { width: 118px; padding-top: 2px; }
.brand-name strong { display: block; font-family: "DejaVu Sans", sans-serif; font-size: 14px; line-height: 14px; letter-spacing: 0.55px; font-weight: 700; }
.brand-name small { display: flex; font-size: 6px; line-height: 7px; letter-spacing: 9.100px; font-weight: 600; }
ul { list-style: none; margin: 0; padding: 17px 0 0; }
li { height: 22.400px; display: flex; align-items: center; padding-left: 18px; font-size: 11px; line-height: 14px; letter-spacing: -0.15px; color: #cfcfcf; }
li span { margin-left: 16px; width: 110px; white-space: normal; }
li:last-child span, li:nth-child(2) span { white-space: nowrap; }
li.dark { background: #343434; }
li.tall { height: 29.300px; }
li.current { background: #232323; color: #fff; font-weight: 700; border-left: 4px solid #82b94e; padding-left: 14px; letter-spacing: -0.35px; }
.collapse { margin-top: 7px; height: 18px; background: #535353; display: flex; justify-content: center; padding-left: 2px; box-shadow: 0 -8px 0 #343434; }
.collapse svg { width: 20px; height: 20px; margin-top: -2px; }

main { width: 1090px; flex: none; padding-left: 26px; }
.card { background: #fff; border: 1px solid #e9e9e9; box-shadow: 0 0 7px rgba(0, 0, 0, .05); }
.top-cards { display: flex; gap: 11px; height: 196px; }
.top-cards .card { border-top: 0; border-radius: 0 0 4px 4px; }
.agent { width: 415px; display: flex; }
.donut-col { width: 223px; padding: 6.500px 0 0 50px; }
.donut { width: 138px; height: 138px; border-radius: 50%; border: 22.500px solid #84c735; display: grid; place-items: center; font-family: Lato, sans-serif; font-weight: 300; font-size: 24.500px; letter-spacing: -0.5px; color: #000; }
.donut span { margin-top: -3px; }
.dot { display: block; width: 12px; height: 12px; border-radius: 50%; background: #84c735; }
.legend { display: flex; align-items: center; gap: 4px; margin: 18.500px 0 0 22px; font-family: Lato, sans-serif; font-weight: 300; font-size: 13px; line-height: 18px; color: #222; }
.facts { font-size: 8.800px; font-weight: 300; color: #000; }
.pulse { width: 98px; height: 30px; margin: 4px 0 6.500px 16px; }
.fact { height: 25.600px; display: flex; align-items: center; gap: 5px; }
.na { font-style: italic; }
.details { width: 612px; padding-left: 40px; display: grid; grid-template-columns: 159px 371px; grid-template-rows: 21px 33px 25px 33px 21px 33px; align-items: center; font-size: 9px; letter-spacing: -0.1px; font-weight: 300; color: #000; }
.details b { font-weight: 600; color: #1b1b1b; letter-spacing: -0.12px; }
.details small { font-size: 8.400px; }
.grey { color: #222; }
.progress { position: relative; height: 14px; border: 1px solid #b2b2b2; display: flex; }
.progress i { width: 61%; background: #b9b9b9; }
.progress em { position: absolute; inset: 0; text-align: center; font-style: normal; font-size: 7.500px; line-height: 13px; }

.events { width: 1038px; height: 108px; margin-top: 16px; }
.events header { height: 31px; display: flex; align-items: center; padding: 0 0 2px 16px; border-bottom: 1px solid #ebebeb; }
.events b { font-size: 8px; margin-left: 8px; font-weight: 700; }
.chart { margin: 9px 0 0 39px; width: 959px; height: 49px; display: grid; grid-template-columns: repeat(24, 1fr); border: 1px solid #b4bfa8; border-left-color: #84c735; background: #84c735; box-shadow: inset 0 1px #cfe8ae, inset 0 -1px #cfe8ae; }
.chart i { border-right: 1px solid #90cd45; margin: 1px 0; }
.chart i:nth-child(-n+4) { border-color: #9ad654; }
.chart i:last-child { border: 0; }
.axis { display: flex; justify-content: space-between; margin: 2px 0 0 24px; font-size: 8px; line-height: 11px; color: #444; width: 989px; }
.axis span { width: 32px; text-align: center; }

.modules { width: 1038px; height: 190px; margin-top: 16px; }
.modules header { height: 32px; display: flex; align-items: center; padding-left: 16px; border-bottom: 1px solid #e4e4e4; }
.modules header b { font-size: 11px; font-weight: 600; margin-left: 8px; letter-spacing: -0.14px; color: #333; }
.inf { margin-left: 2px; }
.count { margin-left: auto; display: flex; align-items: center; gap: 12.500px; padding-right: 19px; font-family: Lato, sans-serif; font-size: 14px; letter-spacing: -0.3px; }
.filters { height: 70px; padding: 0 0 13px 13px; display: grid; align-items: center; grid-template-columns: 49px 115px 177px 87px 107px 68px 117px 90px 99px 79px; font-size: 8.700px; }
.filters b { font-weight: 700; letter-spacing: -0.1px; }
.q { display: flex; align-items: center; gap: 3px; }
.select { width: 84px; height: 20px; display: flex; align-items: center; justify-content: space-between; padding: 0 2px 0 7px; border: 1px solid #ccc; border-radius: 2px; font-size: 9.300px; font-weight: 300; color: #111; }
.select.small { width: 47px; padding: 0 1px 0 6px; }
.input { width: 63px; height: 20px; border: 1px solid #ccc; border-radius: 2px; }
.hier { letter-spacing: -0.05px; color: #333; }
.toggle { width: 24px; height: 13px; border-radius: 7px; background: #c6c6c6; padding: 1px; }
.toggle i { display: block; width: 11px; height: 11px; border-radius: 50%; background: #fff; }
.btn { width: 63px; height: 31px; border: 1px solid #888; border-radius: 2px; display: flex; align-items: center; justify-content: space-between; padding: 0 6px 1px 12px; font-size: 10.500px; }
.btn.reset { width: 78px; }
.row { margin: 0 8px; border-top: 1px solid #e2e2e2; display: grid; align-items: center; }
.head { height: 27px; padding: 0 0 3px 9px; border-top: 2px solid #ececec; grid-template-columns: 21px 27px 27px 92px 162px 255px 37px 31px 54px 160px 58px 74px 8px; font-size: 8px; letter-spacing: 0.330px; color: #333; }
.sort { width: 8px; height: 13px; margin-top: 2px; }
.body { height: 27px; padding-left: 7px; grid-template-columns: 24px 19px 34px 254px 255px 61px 60px 142px 78px 82px; font-size: 8.800px; color: #333; }
.body.alt { background: #f4f4f4; align-items: start; padding-top: 9px; }
.alt .ds { margin-top: -3px; }
.pill { width: 40px; height: 18px; border-radius: 4px; background: #84c735; }
.acts { display: flex; gap: 8px; }
.last { font-size: 7.600px; }
.body .thr { font-size: 8.300px; }

.scroll { margin-left: auto; width: 13px; background: #f1f1f1; display: flex; flex-direction: column; align-items: center; }
.scroll i { width: 10px; height: 159px; margin-top: 52px; background: #c1c1c1; }
.arrow-up { margin-top: 6px; border: 3px solid transparent; border-top: 0; border-bottom-color: #444; }
.arrow-down { margin: auto 0 6px; border: 3px solid transparent; border-bottom: 0; border-top-color: #444; }

.guest-bar { height: 32px; flex: none; display: flex; background: linear-gradient(90deg, #213a40, #213a40 50%, #1d3040 75%, #1b283c); }
.start { width: 39px; display: grid; place-items: center; }
.find { width: 275px; background: #f1f1f1; display: flex; align-items: center; padding: 0 0 1px 9px; font-size: 11.500px; color: #444; letter-spacing: -0.1px; }
.find span { margin-left: 8px; }
.app { width: 39px; display: grid; place-items: center; position: relative; }
.app.hl { background: #48595e; }
.app.on::after { content: ""; position: absolute; bottom: 0; left: 3px; right: 3px; height: 2px; background: #8cc8e8; }
.app.hl::after { left: 0; right: 0; }
.tray { margin-left: auto; display: flex; align-items: center; padding-right: 19px; }
.tray > svg { margin-right: 5px; }
.clock { width: 54px; display: flex; flex-direction: column; align-items: center; font-size: 9.300px; line-height: 14px; letter-spacing: -0.3px; color: #f2f2f2; }
.notice { position: relative; margin: -2px 0 0 11px; color: #fff; }
.notice em { position: absolute; left: 6px; top: 5px; width: 13px; height: 13px; border-radius: 50%; border: 1px solid #9aa4ae; background: #29384c; font-style: normal; font-weight: 600; font-size: 9px; line-height: 11px; text-align: center; }

.status { height: 16px; flex: none; display: flex; align-items: center; margin-left: 1px; background: #262626; color: #f2f2f2; font-size: 9.300px; letter-spacing: -0.110px; }
.devices { margin-left: auto; display: flex; align-items: center; gap: 4px; padding-right: 17px; }
.devices i { width: 1px; height: 13px; background: #eee; margin: 0 3px 0 2px; }

.host-bar { height: 32px; flex: none; display: flex; margin-left: 1px; background: linear-gradient(90deg, #350d18, #330e18 38%, #1a0910 58%, #08060a 72%, #0b060a 82%, #390d18 89%, #3c0e19 96%, #2c0a13); color: #f2f2f2; }
.hx { width: 39.300px; display: grid; place-items: center; position: relative; }
.hx.first { width: 37px; }
.hx.hl { background: #613b47; }
.hx.on::after { content: ""; position: absolute; bottom: 0; left: 3px; right: 3px; height: 2px; background: #dfb5d6; }
.hx.hl::after { left: 0; right: 0; }
.hx em { position: absolute; left: 14px; top: 18px; padding: 0 1px; background: #e9f7f2; color: #155; font-style: normal; font-weight: 700; font-size: 5px; line-height: 6px; }
.host-tray { margin-left: auto; display: flex; align-items: center; padding-right: 20px; }
.desk { font-size: 9.500px; letter-spacing: -0.35px; }
.more { font-size: 13px; margin: -17px 19px 0 6px; }
.host-tray > svg { margin-right: 5px; }
.host-tray > svg:nth-of-type(1) { margin-right: 15px; }
.host-tray .clock { margin: 0 12px 0 -3px; }
.host-tray > svg:last-child { margin-right: 0; }

.cursor { position: absolute; left: 974px; top: 304px; width: 12px; height: 18px; }
</style>
